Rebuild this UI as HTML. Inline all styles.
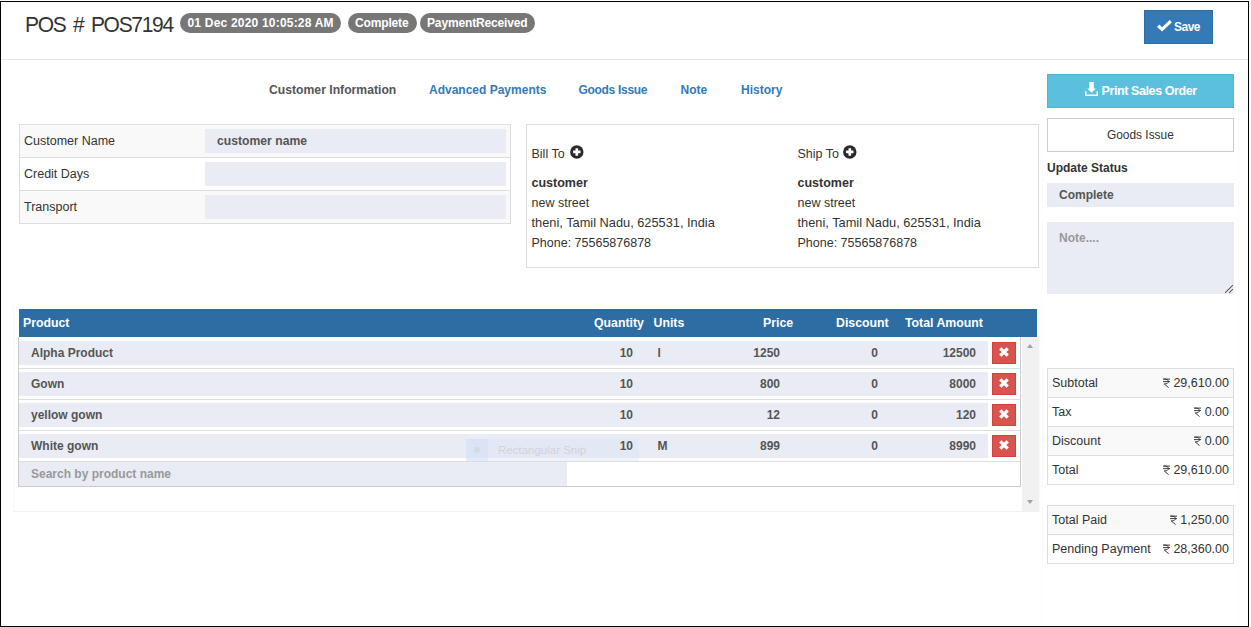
<!DOCTYPE html>
<html><head><meta charset="utf-8">
<style>
html,body{margin:0;padding:0;}
body{width:1251px;height:627px;overflow:hidden;background:#fff;position:relative;font-family:"Liberation Sans",sans-serif;color:#333;}
.a{position:absolute;box-sizing:border-box;}
.t{position:absolute;white-space:nowrap;line-height:15px;}
.rs{display:inline-block;vertical-align:baseline;margin-bottom:-0.5px;}
</style></head>
<body>
<div class="a" style="left:0px;top:1px;width:1249px;height:626px;border:1px solid #000;"></div>
<div class="a" style="left:180px;top:13px;width:161px;height:19.5px;background:#777;border-radius:10px;"></div>
<div class="a" style="left:348px;top:13px;width:69px;height:19.5px;background:#777;border-radius:10px;"></div>
<div class="a" style="left:420px;top:13px;width:115px;height:19.5px;background:#777;border-radius:10px;"></div>
<div class="a" style="left:1144px;top:10px;width:69px;height:34px;background:#337ab7;border:1px solid #2e6da4;"></div>
<svg class="a" style="left:1157px;top:20px;" width="15" height="12" viewBox="0 0 15 12"><path d="M0 6.9L2.3 4.6L5.1 7.3L12.6 0L14.9 2.3L5.1 11.4Z" fill="#fff"/></svg>
<div class="a" style="left:1px;top:59px;width:1247px;height:1px;background:#e5e5e5;"></div>
<div class="a" style="left:1042px;top:71px;width:1px;height:555px;background:#fbfbfb;"></div>
<div class="a" style="left:1238px;top:71px;width:1px;height:555px;background:#fbfbfb;"></div>
<div class="a" style="left:13px;top:306px;width:1px;height:206px;background:#f8f8f8;"></div>
<div class="a" style="left:1039px;top:306px;width:1px;height:206px;background:#fafafa;"></div>
<div class="a" style="left:19px;top:124px;width:492px;height:100px;border:1px solid #ddd;background:#fff;"></div>
<div class="a" style="left:20px;top:125px;width:490px;height:32px;background:#f9f9f9;"></div>
<div class="a" style="left:20px;top:157px;width:490px;height:1px;background:#ddd;"></div>
<div class="a" style="left:20px;top:190px;width:490px;height:1px;background:#ddd;"></div>
<div class="a" style="left:20px;top:191px;width:490px;height:32px;background:#f9f9f9;"></div>
<div class="a" style="left:205px;top:129px;width:301px;height:24px;background:#e9ecf4;"></div>
<div class="a" style="left:205px;top:162px;width:301px;height:24px;background:#e9ecf4;"></div>
<div class="a" style="left:205px;top:195px;width:301px;height:24px;background:#e9ecf4;"></div>
<div class="a" style="left:526px;top:124px;width:513px;height:144px;border:1px solid #ddd;"></div>
<svg class="a" style="left:570px;top:145px;" width="14" height="14" viewBox="0 0 14 14"><circle cx="6.8" cy="7" r="6.7" fill="#2a2a2a"/><path d="M3.1 5.6H5.5V3.3H8.1V5.6H10.5V8.3H8.1V10.7H5.5V8.3H3.1Z" fill="#fff"/></svg>
<svg class="a" style="left:843px;top:145px;" width="14" height="14" viewBox="0 0 14 14"><circle cx="6.8" cy="7" r="6.7" fill="#2a2a2a"/><path d="M3.1 5.6H5.5V3.3H8.1V5.6H10.5V8.3H8.1V10.7H5.5V8.3H3.1Z" fill="#fff"/></svg>
<div class="a" style="left:1047px;top:74px;width:187px;height:34px;background:#5bc0de;border:1px solid #46b8da;"></div>
<svg class="a" style="left:1085px;top:82px;" width="13" height="14" viewBox="0 0 13 14"><path d="M4.4 0H8.8V6.6H11L6.6 10.8L2.2 6.6H4.4Z M0 9.2H1.5V12.4H11.5V9.2H13V14H0Z" fill="#fff"/></svg>
<div class="a" style="left:1047px;top:118px;width:187px;height:34px;background:#fff;border:1px solid #ccc;"></div>
<div class="a" style="left:1047px;top:183px;width:187px;height:24px;background:#e9ecf4;"></div>
<div class="a" style="left:1047px;top:222px;width:187px;height:72px;background:#e9ecf4;"></div>
<svg class="a" style="left:1224px;top:284px;" width="10" height="10" viewBox="0 0 10 10"><path d="M9 1L1 9M9 5L5 9" stroke="#fff" stroke-width="1" transform="translate(0.6,0.6)"/><path d="M8.9 1.1L1.1 8.9M8.9 5.1L5.1 8.9" stroke="#555" stroke-width="1.1"/></svg>
<div class="a" style="left:19px;top:309px;width:1018px;height:28px;background:#2e6da4;"></div>
<div class="a" style="left:13px;top:511px;width:1009px;height:1px;background:#f2f2f2;"></div>
<div class="a" style="left:18px;top:337px;width:1003px;height:150px;border:1px solid #ccc;border-top:none;"></div>
<div class="a" style="left:1022px;top:337px;width:17px;height:175px;background:#f1f1f1;"></div>
<div class="a" style="left:1026.7px;top:344px;width:0px;height:0px;border-left:3.8px solid transparent;border-right:3.8px solid transparent;border-bottom:4px solid #a3a3a3;"></div>
<div class="a" style="left:1026.7px;top:500px;width:0px;height:0px;border-left:3.8px solid transparent;border-right:3.8px solid transparent;border-top:4px solid #a3a3a3;"></div>
<div class="a" style="left:19px;top:341px;width:969px;height:24px;background:#e9ecf4;"></div>
<div class="a" style="left:19px;top:368px;width:1001px;height:1px;background:#ddd;"></div>
<div class="a" style="left:992px;top:342px;width:24px;height:22px;background:#d9534f;border:1px solid #d43f3a;"><svg width="22" height="20" style="position:absolute;left:0;top:0"><path d="M7.3 5.3 L14.7 12.7 M14.7 5.3 L7.3 12.7" stroke="#fff" stroke-width="3.3" stroke-linecap="butt"/></svg></div>
<div class="a" style="left:19px;top:372px;width:969px;height:24px;background:#e9ecf4;"></div>
<div class="a" style="left:19px;top:399px;width:1001px;height:1px;background:#ddd;"></div>
<div class="a" style="left:992px;top:373px;width:24px;height:22px;background:#d9534f;border:1px solid #d43f3a;"><svg width="22" height="20" style="position:absolute;left:0;top:0"><path d="M7.3 5.3 L14.7 12.7 M14.7 5.3 L7.3 12.7" stroke="#fff" stroke-width="3.3" stroke-linecap="butt"/></svg></div>
<div class="a" style="left:19px;top:403px;width:969px;height:24px;background:#e9ecf4;"></div>
<div class="a" style="left:19px;top:430px;width:1001px;height:1px;background:#ddd;"></div>
<div class="a" style="left:992px;top:404px;width:24px;height:22px;background:#d9534f;border:1px solid #d43f3a;"><svg width="22" height="20" style="position:absolute;left:0;top:0"><path d="M7.3 5.3 L14.7 12.7 M14.7 5.3 L7.3 12.7" stroke="#fff" stroke-width="3.3" stroke-linecap="butt"/></svg></div>
<div class="a" style="left:19px;top:434px;width:969px;height:24px;background:#e9ecf4;"></div>
<div class="a" style="left:19px;top:461px;width:1001px;height:1px;background:#ddd;"></div>
<div class="a" style="left:992px;top:435px;width:24px;height:22px;background:#d9534f;border:1px solid #d43f3a;"><svg width="22" height="20" style="position:absolute;left:0;top:0"><path d="M7.3 5.3 L14.7 12.7 M14.7 5.3 L7.3 12.7" stroke="#fff" stroke-width="3.3" stroke-linecap="butt"/></svg></div>
<div class="a" style="left:466px;top:439px;width:173px;height:22px;background:rgba(220,230,245,0.45);"></div>
<div class="a" style="left:466px;top:439px;width:22px;height:22px;background:rgba(200,220,245,0.35);"></div>
<div class="a" style="left:474px;top:447px;width:6px;height:6px;border-radius:3px;background:#d5d9e0;"></div>
<div class="a" style="left:19px;top:462px;width:548px;height:24px;background:#e9ecf4;"></div>
<div class="a" style="left:1047px;top:368px;width:187px;height:117px;border:1px solid #ddd;"></div>
<div class="a" style="left:1048px;top:369px;width:185px;height:28px;background:#f9f9f9;"></div>
<div class="a" style="left:1048px;top:397px;width:185px;height:1px;background:#ddd;"></div>
<div class="a" style="left:1048px;top:426px;width:185px;height:1px;background:#ddd;"></div>
<div class="a" style="left:1048px;top:427px;width:185px;height:28px;background:#f9f9f9;"></div>
<div class="a" style="left:1048px;top:455px;width:185px;height:1px;background:#ddd;"></div>
<div class="a" style="left:1047px;top:505px;width:187px;height:59px;border:1px solid #ddd;"></div>
<div class="a" style="left:1048px;top:506px;width:185px;height:28px;background:#f9f9f9;"></div>
<div class="a" style="left:1048px;top:534px;width:185px;height:1px;background:#ddd;"></div>
<div class="t" style="top:17px;font-size:21px;color:#333;letter-spacing:-1.3px;left:25px;word-spacing:3px;transform:scaleY(1.08);transform-origin:0 15px;">POS # POS7194</div>
<div class="t" style="top:16px;font-size:12px;color:#fff;font-weight:bold;letter-spacing:0.2px;left:187.5px;">01 Dec 2020 10:05:28 AM</div>
<div class="t" style="top:16px;font-size:12px;color:#fff;font-weight:bold;letter-spacing:-0.15px;left:355px;">Complete</div>
<div class="t" style="top:16px;font-size:12px;color:#fff;font-weight:bold;letter-spacing:-0.15px;left:427px;">PaymentReceived</div>
<div class="t" style="top:20px;font-size:12px;color:#fff;font-weight:bold;letter-spacing:-0.5px;left:1174px;">Save</div>
<div class="t" style="top:83px;font-size:12.2px;color:#555;font-weight:bold;left:269px;">Customer Information</div>
<div class="t" style="top:83px;font-size:12px;color:#337ab7;font-weight:bold;left:429px;">Advanced Payments</div>
<div class="t" style="top:83px;font-size:12px;color:#337ab7;font-weight:bold;letter-spacing:-0.3px;left:578.5px;">Goods Issue</div>
<div class="t" style="top:83px;font-size:12px;color:#337ab7;font-weight:bold;left:680.5px;">Note</div>
<div class="t" style="top:83px;font-size:12px;color:#337ab7;font-weight:bold;left:741px;">History</div>
<div class="t" style="top:134px;font-size:12.5px;color:#333;left:24px;">Customer Name</div>
<div class="t" style="top:167px;font-size:12.5px;color:#333;left:24px;">Credit Days</div>
<div class="t" style="top:200px;font-size:12.5px;color:#333;left:24px;">Transport</div>
<div class="t" style="top:134px;font-size:12.2px;color:#555;font-weight:bold;left:217px;">customer name</div>
<div class="t" style="top:147px;font-size:12.5px;color:#333;left:531.5px;">Bill To</div>
<div class="t" style="top:176px;font-size:12.5px;color:#333;font-weight:bold;left:531.5px;">customer</div>
<div class="t" style="top:196px;font-size:12.5px;color:#333;left:531.5px;">new street</div>
<div class="t" style="top:215px;font-size:12.8px;color:#333;left:531.5px;">theni, Tamil Nadu, 625531, India</div>
<div class="t" style="top:236px;font-size:12.5px;color:#333;left:531.5px;">Phone: 75565876878</div>
<div class="t" style="top:147px;font-size:12.5px;color:#333;left:797.5px;">Ship To</div>
<div class="t" style="top:176px;font-size:12.5px;color:#333;font-weight:bold;left:797.5px;">customer</div>
<div class="t" style="top:196px;font-size:12.5px;color:#333;left:797.5px;">new street</div>
<div class="t" style="top:215px;font-size:12.8px;color:#333;left:797.5px;">theni, Tamil Nadu, 625531, India</div>
<div class="t" style="top:236px;font-size:12.5px;color:#333;left:797.5px;">Phone: 75565876878</div>
<div class="t" style="top:84px;font-size:12.5px;color:#fff;font-weight:bold;letter-spacing:-0.4px;left:1101.5px;">Print Sales Order</div>
<div class="t" style="top:128px;font-size:11.9px;color:#333;left:1107px;">Goods Issue</div>
<div class="t" style="top:161px;font-size:12px;color:#333;font-weight:bold;left:1047px;">Update Status</div>
<div class="t" style="top:188px;font-size:12px;color:#555;font-weight:bold;left:1059px;">Complete</div>
<div class="t" style="top:231px;font-size:12px;color:#999;font-weight:bold;left:1059px;">Note....</div>
<div class="t" style="top:316px;font-size:12.3px;color:#fff;font-weight:bold;left:23px;">Product</div>
<div class="t" style="top:316px;font-size:12.3px;color:#fff;font-weight:bold;left:594px;">Quantity</div>
<div class="t" style="top:316px;font-size:12.3px;color:#fff;font-weight:bold;left:653.5px;">Units</div>
<div class="t" style="top:316px;font-size:12.3px;color:#fff;font-weight:bold;left:763px;">Price</div>
<div class="t" style="top:316px;font-size:12.3px;color:#fff;font-weight:bold;left:836px;">Discount</div>
<div class="t" style="top:316px;font-size:12.3px;color:#fff;font-weight:bold;left:905px;">Total Amount</div>
<div class="t" style="top:346px;font-size:12px;color:#555;font-weight:bold;left:31px;">Alpha Product</div>
<div class="t" style="top:346px;font-size:12px;color:#555;font-weight:bold;right:618px;">10</div>
<div class="t" style="top:346px;font-size:12px;color:#555;font-weight:bold;left:657.5px;">l</div>
<div class="t" style="top:346px;font-size:12px;color:#555;font-weight:bold;right:471px;">1250</div>
<div class="t" style="top:346px;font-size:12px;color:#555;font-weight:bold;right:373px;">0</div>
<div class="t" style="top:346px;font-size:12px;color:#555;font-weight:bold;right:275px;">12500</div>
<div class="t" style="top:377px;font-size:12px;color:#555;font-weight:bold;left:31px;">Gown</div>
<div class="t" style="top:377px;font-size:12px;color:#555;font-weight:bold;right:618px;">10</div>
<div class="t" style="top:377px;font-size:12px;color:#555;font-weight:bold;right:471px;">800</div>
<div class="t" style="top:377px;font-size:12px;color:#555;font-weight:bold;right:373px;">0</div>
<div class="t" style="top:377px;font-size:12px;color:#555;font-weight:bold;right:275px;">8000</div>
<div class="t" style="top:408px;font-size:12px;color:#555;font-weight:bold;left:31px;">yellow gown</div>
<div class="t" style="top:408px;font-size:12px;color:#555;font-weight:bold;right:618px;">10</div>
<div class="t" style="top:408px;font-size:12px;color:#555;font-weight:bold;right:471px;">12</div>
<div class="t" style="top:408px;font-size:12px;color:#555;font-weight:bold;right:373px;">0</div>
<div class="t" style="top:408px;font-size:12px;color:#555;font-weight:bold;right:275px;">120</div>
<div class="t" style="top:439px;font-size:12px;color:#555;font-weight:bold;left:31px;">White gown</div>
<div class="t" style="top:439px;font-size:12px;color:#555;font-weight:bold;right:618px;">10</div>
<div class="t" style="top:439px;font-size:12px;color:#555;font-weight:bold;left:657.5px;">M</div>
<div class="t" style="top:439px;font-size:12px;color:#555;font-weight:bold;right:471px;">899</div>
<div class="t" style="top:439px;font-size:12px;color:#555;font-weight:bold;right:373px;">0</div>
<div class="t" style="top:439px;font-size:12px;color:#555;font-weight:bold;right:275px;">8990</div>
<div class="t" style="top:443px;font-size:11.5px;color:#cfd3da;left:498px;">Rectangular Snip</div>
<div class="t" style="top:467px;font-size:12px;color:#999;font-weight:bold;left:31px;">Search by product name</div>
<div class="t" style="top:376px;font-size:12.5px;color:#333;left:1052px;">Subtotal</div>
<div class="t" style="top:376px;font-size:12.5px;color:#333;right:22px;"><svg class="rs" width="7" height="10" viewBox="0 0 7 10"><path d="M0 1.1H7M0 3.6H7M0.6 1.1C4.6 1.1 5.4 2.2 5.4 3.6C5.4 5.1 4.2 5.9 1.2 5.9L5.6 9.6" stroke="#333" stroke-width="0.95" fill="none"/></svg> 29,610.00</div>
<div class="t" style="top:405px;font-size:12.5px;color:#333;left:1052px;">Tax</div>
<div class="t" style="top:405px;font-size:12.5px;color:#333;right:22px;"><svg class="rs" width="7" height="10" viewBox="0 0 7 10"><path d="M0 1.1H7M0 3.6H7M0.6 1.1C4.6 1.1 5.4 2.2 5.4 3.6C5.4 5.1 4.2 5.9 1.2 5.9L5.6 9.6" stroke="#333" stroke-width="0.95" fill="none"/></svg> 0.00</div>
<div class="t" style="top:434px;font-size:12.5px;color:#333;left:1052px;">Discount</div>
<div class="t" style="top:434px;font-size:12.5px;color:#333;right:22px;"><svg class="rs" width="7" height="10" viewBox="0 0 7 10"><path d="M0 1.1H7M0 3.6H7M0.6 1.1C4.6 1.1 5.4 2.2 5.4 3.6C5.4 5.1 4.2 5.9 1.2 5.9L5.6 9.6" stroke="#333" stroke-width="0.95" fill="none"/></svg> 0.00</div>
<div class="t" style="top:463px;font-size:12.5px;color:#333;left:1052px;">Total</div>
<div class="t" style="top:463px;font-size:12.5px;color:#333;right:22px;"><svg class="rs" width="7" height="10" viewBox="0 0 7 10"><path d="M0 1.1H7M0 3.6H7M0.6 1.1C4.6 1.1 5.4 2.2 5.4 3.6C5.4 5.1 4.2 5.9 1.2 5.9L5.6 9.6" stroke="#333" stroke-width="0.95" fill="none"/></svg> 29,610.00</div>
<div class="t" style="top:513px;font-size:12.5px;color:#333;left:1052px;">Total Paid</div>
<div class="t" style="top:513px;font-size:12.5px;color:#333;right:22px;"><svg class="rs" width="7" height="10" viewBox="0 0 7 10"><path d="M0 1.1H7M0 3.6H7M0.6 1.1C4.6 1.1 5.4 2.2 5.4 3.6C5.4 5.1 4.2 5.9 1.2 5.9L5.6 9.6" stroke="#333" stroke-width="0.95" fill="none"/></svg> 1,250.00</div>
<div class="t" style="top:542px;font-size:12.5px;color:#333;left:1052px;">Pending Payment</div>
<div class="t" style="top:542px;font-size:12.5px;color:#333;right:22px;"><svg class="rs" width="7" height="10" viewBox="0 0 7 10"><path d="M0 1.1H7M0 3.6H7M0.6 1.1C4.6 1.1 5.4 2.2 5.4 3.6C5.4 5.1 4.2 5.9 1.2 5.9L5.6 9.6" stroke="#333" stroke-width="0.95" fill="none"/></svg> 28,360.00</div>
</body></html>
